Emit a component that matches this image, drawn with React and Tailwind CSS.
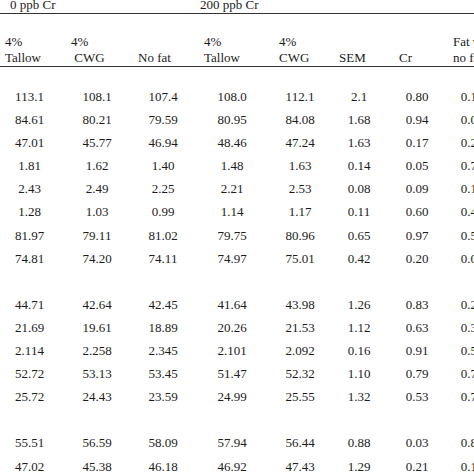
const cols = "grid grid-cols-[66px_67px_66px_75px_60px_60px_54px_60px]";
const widths = ["w-[49px]", "w-[52px]", "w-[50px]", "w-[56px]", "w-[42px]", "w-[40px]", "w-[36px]", "w-[38px]"];

const groups = [
  [
    ["113.1", "108.1", "107.4", "108.0", "112.1", "2.1", "0.80", "0.13"],
    ["84.61", "80.21", "79.59", "80.95", "84.08", "1.68", "0.94", "0.05"],
    ["47.01", "45.77", "46.94", "48.46", "47.24", "1.63", "0.17", "0.25"],
    ["1.81", "1.62", "1.40", "1.48", "1.63", "0.14", "0.05", "0.78"],
    ["2.43", "2.49", "2.25", "2.21", "2.53", "0.08", "0.09", "0.12"],
    ["1.28", "1.03", "0.99", "1.14", "1.17", "0.11", "0.60", "0.43"],
    ["81.97", "79.11", "81.02", "79.75", "80.96", "0.65", "0.97", "0.54"],
    ["74.81", "74.20", "74.11", "74.97", "75.01", "0.42", "0.20", "0.06"],
  ],
  [
    ["44.71", "42.64", "42.45", "41.64", "43.98", "1.26", "0.83", "0.24"],
    ["21.69", "19.61", "18.89", "20.26", "21.53", "1.12", "0.63", "0.35"],
    ["2.114", "2.258", "2.345", "2.101", "2.092", "0.16", "0.91", "0.52"],
    ["52.72", "53.13", "53.45", "51.47", "52.32", "1.10", "0.79", "0.71"],
    ["25.72", "24.43", "23.59", "24.99", "25.55", "1.32", "0.53", "0.76"],
  ],
  [
    ["55.51", "56.59", "58.09", "57.94", "56.44", "0.88", "0.03", "0.84"],
    ["47.02", "45.38", "46.18", "46.92", "47.43", "1.29", "0.21", "0.17"],
  ],
];

const headers = [
  ["4%", "Tallow"],
  ["4%", "\u00a0CWG"],
  ["", "No fat"],
  ["4%", "Tallow"],
  ["4%", "CWG"],
  ["", "SEM"],
  ["", "Cr"],
  ["Fat vs", "no fat"],
];

const App = () => {
  return (
    <div className="w-[474px] h-[474px] overflow-hidden bg-white text-[13px] text-[#1c1c1c] font-['Liberation_Serif',serif] whitespace-nowrap">
      <div className="h-[13px] flex leading-[16px]">
        <span className="w-[200px] pl-[10px] -mt-[3.5px]">0 ppb Cr</span>
        <span className="-mt-[3.5px]">200 ppb Cr</span>
      </div>
      <div className="border-t-[1.5px] border-[#333] pt-[20px] border-b-[1.5px] pl-[5px]">
        <div className={`${cols} leading-[16px]`}>
          {headers.map((h, i) => (
            <div key={i} className="flex flex-col">
              <span>{h[0] || "\u00a0"}</span>
              <span>{h[1]}</span>
            </div>
          ))}
        </div>
      </div>
      <div className="pt-[18px] pl-[5px]">
        {groups.map((g, gi) => (
          <div key={gi} className={gi > 0 ? "pt-[23.1px]" : ""}>
            {g.map((row, ri) => (
              <div key={ri} className={`${cols} h-[23.1px] leading-[23.1px]`}>
                {row.map((v, ci) => (
                  <span key={ci} className={`${widths[ci]} text-center`}>{v}</span>
                ))}
              </div>
            ))}
          </div>
        ))}
      </div>
    </div>
  );
};

export default App;
